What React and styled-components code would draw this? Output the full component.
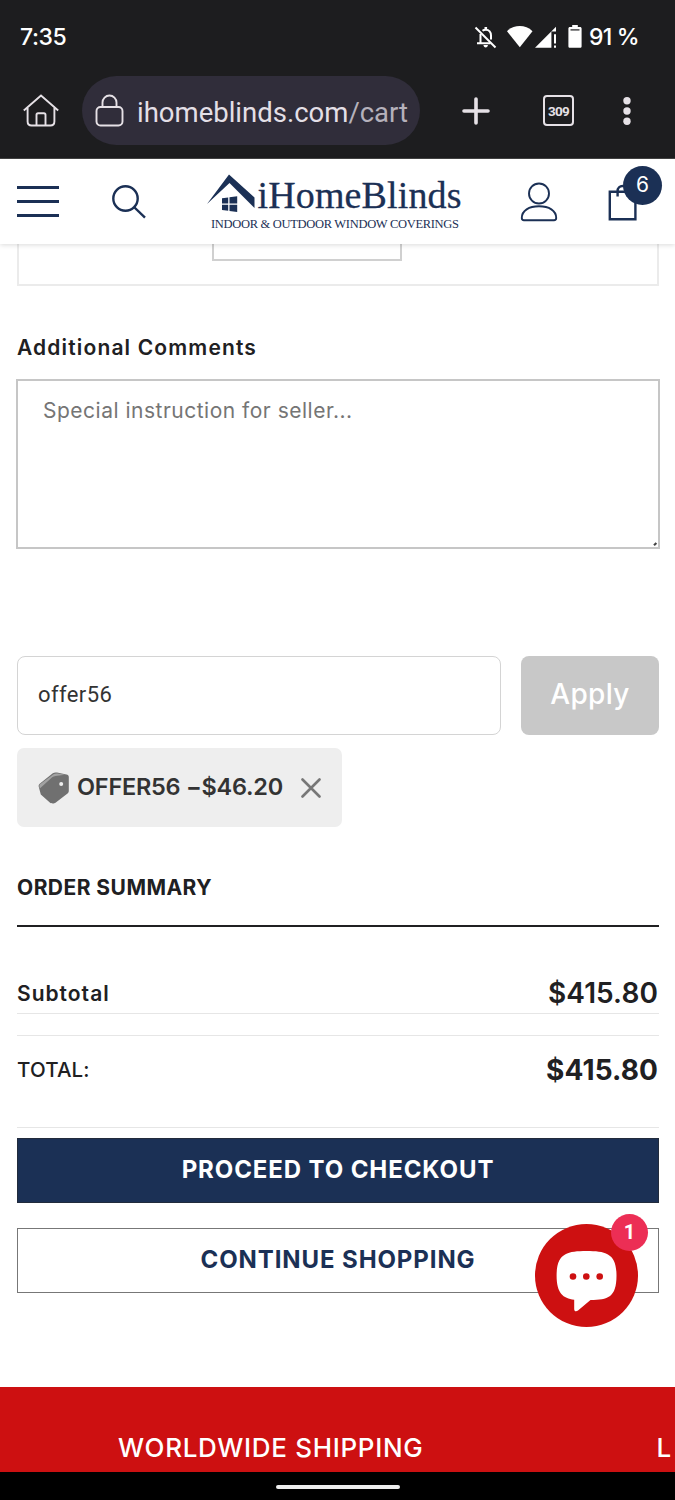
import styled, { createGlobalStyle } from 'styled-components';

const navy = '#1b3055';
const red = '#cd1011';

const rows = [
  { label: 'Subtotal', value: '$415.80' },
  { label: 'TOTAL:', value: '$415.80', total: true }
];

export default function App() {
  return (
    <>
      <GlobalStyle />
      <Screen>
        <StatusBar />
        <BrowserBar />
        <SiteHeader />
        <Content>
          <CartItem>
            <Quantity />
          </CartItem>
          <CommentsTitle>Additional Comments</CommentsTitle>
          <Comments>
            Special instruction for seller...
            <Grip width="6" height="6" viewBox="0 0 6 6">
              <path d="M2 4.200 4.400 2" stroke="#444" strokeWidth="2.2" />
            </Grip>
          </Comments>
          <CouponForm>
            <CouponInput>offer56</CouponInput>
            <ApplyButton>Apply</ApplyButton>
          </CouponForm>
          <Discount />
          <SummaryTitle>ORDER SUMMARY</SummaryTitle>
          {rows.map(({ label, value, total }) => (
            <SummaryRow key={label} $total={total}>
              <RowLabel $total={total}>{label}</RowLabel>
              <RowValue $total={total}>{value}</RowValue>
            </SummaryRow>
          ))}
          <CheckoutButton>PROCEED TO CHECKOUT</CheckoutButton>
          <ContinueButton>CONTINUE SHOPPING</ContinueButton>
        </Content>
        <Marquee>
          <span>WORLDWIDE SHIPPING</span>
          <span>L</span>
        </Marquee>
        <NavBar>
          <NavPill />
        </NavBar>
        <ChatWidget />
      </Screen>
    </>
  );
}

const StatusBar = () => (
  <StyledStatusBar>
    <Clock>7:35</Clock>
    <svg width="84" height="24" viewBox="0 0 84 24" fill="none">
      <g stroke="#fff" strokeWidth="2">
        <path d="M1.500 2.500 21.500 22.500" />
        <path d="M8.500 5.800C9.500 5 10.500 4.700 11.800 4.700c3.300 0 5.200 2.500 5.200 5.700v4.200M6.500 9v9.200M3 18.200h13.500" />
      </g>
      <path d="M10.500 4.500V2h2.600v2.500zM9.500 20h4.400c0 1.500-1 2.500-2.200 2.500s-2.200-1-2.200-2.500z" fill="#fff" />
      <path d="M33 6.200C40-.6 51.500-.6 58.500 6.200L45.800 22.200z" fill="#fff" />
      <path d="M61 22.800 82 1.800v4.700h-4.600v16.300z" fill="#fff" />
      <path d="M80 9.200h2v9.300h-2zM80 20.500h2v2.200h-2z" fill="#fff" />
    </svg>
    <BatteryIcon width="14" height="23" viewBox="0 0 14 23" fill="#fff">
      <path d="M4.200 0h5.600v2H12c1 0 1.600.6 1.600 1.600v17.600c0 1-.6 1.600-1.600 1.600H2c-1 0-1.600-.6-1.600-1.600V3.600C.4 2.600 1 2 2 2h2.200z" />
      <path d="M2.500 4.300h9v1.200h-9z" fill="#1d1d1f" />
    </BatteryIcon>
    <Battery>91 %</Battery>
  </StyledStatusBar>
);

const BrowserBar = () => (
  <StyledBrowserBar>
    <HomeIcon width="36" height="34" viewBox="0 0 36 34" fill="none" stroke="#e6e1e6" strokeWidth="1.9">
      <path d="M.8 16.500 18 1.500l17.200 15M4.600 14v13.500c0 2.600 1.400 4 4 4h18.800c2.600 0 4-1.400 4-4V14" />
      <path d="M13.500 31.500V20.800c0-1 .6-1.600 1.600-1.600h5.800c1 0 1.600.6 1.600 1.600v10.700" />
    </HomeIcon>
    <Omnibox>
      <svg width="30" height="34" viewBox="0 0 30 34" fill="none" stroke="#e6e1e6" strokeWidth="1.9">
        <rect x="1.5" y="13" width="26" height="18.5" rx="4" />
        <path d="M7.500 13V8.500a7 7 0 0 1 14 0V13" />
      </svg>
      <Url>
        ihomeblinds.com<span>/cart</span>
      </Url>
    </Omnibox>
    <PlusIcon width="28" height="28" viewBox="0 0 28 28" stroke="#e6e1e6" strokeWidth="3.6" strokeLinecap="round">
      <path d="M14 2v24M2 14h24" />
    </PlusIcon>
    <TabCount>309</TabCount>
    <svg width="8" height="28" viewBox="0 0 8 28" fill="#e6e1e6">
      <circle cx="4" cy="3.7" r="3.7" />
      <circle cx="4" cy="14" r="3.7" />
      <circle cx="4" cy="24.3" r="3.7" />
    </svg>
  </StyledBrowserBar>
);

const SiteHeader = () => (
  <StyledHeader>
    <MenuIcon>
      <i />
      <i />
      <i />
    </MenuIcon>
    <SearchIcon width="34" height="34" viewBox="0 0 34 34" fill="none" stroke={navy} strokeWidth="2.4">
      <circle cx="13.5" cy="13.5" r="12.2" />
      <path d="M22 22l11 10.600" />
    </SearchIcon>
    <Logo width="256" height="60" viewBox="0 0 256 60" fill={navy}>
      <path d="M0 32 22 2.500 47.500 25.600v10.400L22.500 11z" />
      <path d="M15 26.200l6.200-.8v6H15zM22.500 25.200l7.700-1v7.200h-7.700zM15 32.700h6.200v6L15 38zM22.500 32.700h7.700v7.200l-7.700-1z" />
      <LogoName x="50.5" y="35.500" textLength="204">
        iHomeBlinds
      </LogoName>
      <LogoTagline x="4" y="56" textLength="248">
        INDOOR &amp; OUTDOOR WINDOW COVERINGS
      </LogoTagline>
    </Logo>
    <AccountIcon width="38" height="40" viewBox="0 0 38 40" fill="none" stroke={navy} strokeWidth="1.9">
      <circle cx="19" cy="11.5" r="10" />
      <path d="M4 38.200h30c1.500 0 2.200-.8 2.200-2.200C36.200 28.500 29 24.300 19 24.300S1.800 28.500 1.800 36c0 1.400.7 2.200 2.200 2.200z" />
    </AccountIcon>
    <Bag>
      <svg width="30" height="40" viewBox="0 0 30 40" fill="none" stroke={navy} strokeWidth="2.4">
        <path d="M2.800 9.800h25.600v27.400H2.800zM10.600 14.500V9a5 5 0 0 1 10 0v5.500" />
      </svg>
      <BagCount>6</BagCount>
    </Bag>
  </StyledHeader>
);

const Discount = () => (
  <StyledDiscount>
    <svg width="32" height="32" viewBox="0 0 32 32">
      <path d="M2 11.500C.8 12.200.4 13.500.8 15l2 7.500 9 8c1.200 1.200 4.500 1.200 5.700.2l11.700-9c1-.8 1.600-1.700 1.600-3V5c0-1.500-1-2.300-2.300-2.500L19 .6c-1.500-.3-3-.1-4.200.6z" fill="#707070" />
      <path d="M1.800 16.500C1 13.800 1.300 12.500 3 11.500L15.500 2.300c1.200-.8 2.400-1 4-.8l7.500 1.200-9.500 1.200c-1.300.2-2.300.6-3.300 1.300z" fill="#a2a2a2" />
      <circle cx="23.2" cy="12" r="2" fill="#eee" />
    </svg>
    <DiscountText>OFFER56 −$46.20</DiscountText>
    <svg width="20" height="20" viewBox="0 0 20 20" stroke="#777" strokeWidth="2.6" strokeLinecap="round">
      <path d="M1.500 1.500l17 17M18.500 1.500l-17 17" />
    </svg>
  </StyledDiscount>
);

const ChatWidget = () => (
  <ChatButton>
    <svg width="62" height="64" viewBox="0 0 62 64">
      <path d="M30.500 1C50 1 60.500 3.500 60.500 25.500S52 49.800 34.500 50L22 60.500c-2 1.500-3.800.8-3.800-1.500V49.700C7 48.500.6 43 .6 25.500.6 3.500 11 1 30.500 1z" fill="#fff" />
      <g fill={red}>
        <circle cx="17" cy="26.500" r="3.300" />
        <circle cx="30.300" cy="26.500" r="3.300" />
        <circle cx="43.700" cy="26.500" r="3.300" />
      </g>
    </svg>
    <ChatBadge>1</ChatBadge>
  </ChatButton>
);

const GlobalStyle = createGlobalStyle`
  * {
    box-sizing: border-box;
  }
  body {
    margin: 0;
    background: #fff;
    font-family: Inter, sans-serif;
    color: #202022;
  }
  svg {
    display: block;
    flex-shrink: 0;
  }
`;

const Screen = styled.div`
  position: relative;
  display: flex;
  flex-direction: column;
  width: 675px;
  height: 1500px;
  overflow: hidden;
  background: #fff;
  white-space: nowrap;
`;

const StyledStatusBar = styled.div`
  display: flex;
  align-items: center;
  height: 72px;
  padding: 1px 37px 0 20px;
  background: #1d1d1f;
  color: #fff;
  font-size: 23px;
  font-weight: 500;
`;

const Clock = styled.span`
  flex: 1;
  letter-spacing: -0.4px;
`;

const BatteryIcon = styled.svg`
  margin-left: 10px;
`;

const Battery = styled.span`
  width: 49px;
  margin-left: 7px;
  letter-spacing: -0.8px;
`;

const StyledBrowserBar = styled.div`
  display: flex;
  align-items: center;
  height: 87px;
  padding: 0 44px 9px 23px;
  background: #1d1d1f;
  border-bottom: 1px solid #444;
`;

const HomeIcon = styled.svg`
  margin-right: 23px;
`;

const Omnibox = styled.div`
  display: flex;
  align-items: center;
  gap: 12px;
  width: 338px;
  height: 69px;
  padding-left: 13px;
  border-radius: 35px;
  background: #302d3a;
`;

const Url = styled.span`
  padding-top: 3px;
  color: #e3dfe6;
  font: 27.5px Roboto, sans-serif;
  span {
    color: #b5b1bb;
  }
`;

const PlusIcon = styled.svg`
  margin: 0 53px 0 42px;
`;

const TabCount = styled.span`
  display: flex;
  align-items: center;
  justify-content: center;
  width: 31px;
  height: 31px;
  margin-right: 49px;
  border: 2px solid #e6e1e6;
  border-radius: 4px;
  color: #e6e1e6;
  font: 700 13.5px Roboto, sans-serif;
  letter-spacing: -0.7px;
`;

const StyledHeader = styled.header`
  position: relative;
  display: flex;
  height: 85px;
  padding-left: 17px;
  background: #fff;
  box-shadow: 0 1px 5px rgba(0, 0, 0, 0.15);
`;

const MenuIcon = styled.div`
  display: flex;
  flex-direction: column;
  justify-content: space-between;
  width: 42px;
  height: 31px;
  margin: 27px 53px 0 0;
  i {
    height: 3px;
    background: ${navy};
  }
`;

const SearchIcon = styled.svg`
  margin: 26px 61px 0 0;
`;

const Logo = styled.svg`
  margin: 13px 57px 0 0;
`;

const LogoName = styled.text`
  font: 38px 'Liberation Serif', serif;
  stroke: ${navy};
  stroke-width: 0.3px;
`;

const LogoTagline = styled.text`
  font: 12.5px 'Liberation Serif', serif;
`;

const AccountIcon = styled.svg`
  margin: 23px 49px 0 0;
`;

const Bag = styled.div`
  position: relative;
  margin-top: 23px;
`;

const BagCount = styled.span`
  position: absolute;
  left: 16px;
  top: -16px;
  width: 39px;
  height: 39px;
  border-radius: 50%;
  background: ${navy};
  color: #fff;
  font-size: 21px;
  line-height: 38px;
  text-align: center;
`;

const Content = styled.main`
  display: flex;
  flex-direction: column;
  height: 1143px;
  padding: 0 16px 0 17px;
`;

const CartItem = styled.div`
  display: flex;
  height: 42px;
  padding-left: 193px;
  border: solid #ebebeb;
  border-width: 0 2px 2px;
`;

const Quantity = styled.div`
  width: 190px;
  height: 17px;
  border: solid #d0d0d0;
  border-width: 0 2px 2px;
`;

const CommentsTitle = styled.h3`
  margin: 46px 0 0;
  font-size: 21px;
  line-height: 31px;
  font-weight: 600;
  letter-spacing: 1.15px;
`;

const Comments = styled.div`
  position: relative;
  height: 170px;
  margin: 16px -1px 0;
  padding: 16px 25px;
  border: 2px solid #c6c6c6;
  color: #757575;
  font-size: 21px;
  line-height: 28px;
  letter-spacing: 0.5px;
`;

const Grip = styled.svg`
  position: absolute;
  right: 0;
  bottom: 0;
`;

const CouponForm = styled.div`
  display: flex;
  gap: 20px;
  height: 79px;
  margin-top: 107px;
`;

const CouponInput = styled.div`
  flex: 1;
  padding-left: 20px;
  border: 1.5px solid #d4d4d4;
  border-radius: 8px;
  color: #333;
  font: 22px/75px Roboto, sans-serif;
  letter-spacing: 0.4px;
`;

const ApplyButton = styled.div`
  width: 138px;
  border-radius: 8px;
  background: #c8c8c8;
  color: #fff;
  font-size: 28px;
  font-weight: 500;
  line-height: 76px;
  letter-spacing: 0.3px;
  text-align: center;
`;

const StyledDiscount = styled.div`
  display: flex;
  align-items: center;
  width: 325px;
  height: 79px;
  margin-top: 13px;
  padding-left: 21px;
  border-radius: 7px;
  background: #eee;
`;

const DiscountText = styled.span`
  width: 206px;
  margin: -2px 18px 0 7px;
  color: #333;
  font-size: 23.5px;
  font-weight: 600;
  letter-spacing: -0.25px;
`;

const SummaryTitle = styled.h3`
  height: 54px;
  margin: 46px 0 46px;
  border-bottom: 2px solid #202022;
  font-size: 21px;
  line-height: 30px;
  font-weight: 700;
  letter-spacing: 0.45px;
`;

const SummaryRow = styled.div`
  display: flex;
  align-items: center;
  justify-content: space-between;
  height: ${({ $total }) => ($total ? '93px' : '41px')};
  margin-bottom: ${({ $total }) => ($total ? '10px' : '21px')};
  padding: ${({ $total }) => ($total ? '0 1px 24px 0' : '0 1px 0 0')};
  border-top: ${({ $total }) => ($total ? '1.5px solid #e6e6e6' : 'none')};
  border-bottom: 1.5px solid #e6e6e6;
`;

const RowLabel = styled.span`
  font-size: ${({ $total }) => ($total ? '20.5px' : '21px')};
  font-weight: ${({ $total }) => ($total ? 500 : 600)};
  letter-spacing: ${({ $total }) => ($total ? '0.15px' : '1px')};
`;

const RowValue = styled.span`
  font-size: 28px;
  font-weight: ${({ $total }) => ($total ? 700 : 600)};
  letter-spacing: 0.1px;
`;

const Button = styled.div`
  flex-shrink: 0;
  height: 65px;
  font-size: 24px;
  font-weight: 700;
  line-height: 62px;
  letter-spacing: 0.9px;
  text-align: center;
`;

const CheckoutButton = styled(Button)`
  background: ${navy};
  border: 1px solid #222b3c;
  color: #fff;
`;

const ContinueButton = styled(Button)`
  margin-top: 25px;
  border: 1.5px solid #777;
  color: ${navy};
`;

const Marquee = styled.div`
  display: flex;
  gap: 233px;
  height: 85px;
  padding: 43px 0 0 118px;
  overflow: hidden;
  background: ${red};
  color: #fff;
  font-size: 26px;
  font-weight: 500;
  line-height: 36px;
  letter-spacing: 0.68px;
`;

const NavBar = styled.div`
  display: flex;
  justify-content: center;
  align-items: center;
  height: 28px;
  padding-top: 2px;
  background: #000;
`;

const NavPill = styled.div`
  width: 124px;
  height: 4px;
  border-radius: 2px;
  background: #eee;
`;

const ChatButton = styled.div`
  position: absolute;
  left: 535px;
  top: 1224px;
  width: 103px;
  height: 103px;
  padding: 26px 0 0 21px;
  border-radius: 50%;
  background: ${red};
`;

const ChatBadge = styled.span`
  position: absolute;
  left: 76px;
  top: -10px;
  width: 37px;
  height: 37px;
  border-radius: 50%;
  background: #ec2e55;
  color: #fff;
  font: 700 20px/36px Roboto, sans-serif;
  text-align: center;
`;
